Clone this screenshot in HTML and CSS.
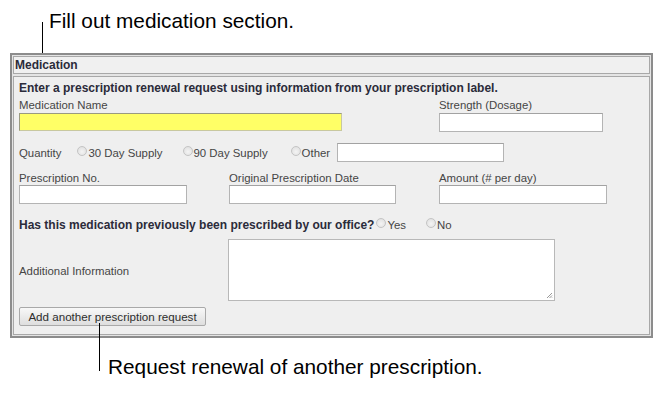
FILE: index.html
```html
<!DOCTYPE html>
<html>
<head>
<meta charset="utf-8">
<link rel="stylesheet" href="styles.css">
</head>
<body>
<div class="page">
  <div class="note note-top">Fill out medication section.</div>
  <span class="pointer pointer-top"></span>

  <div class="frame">
    <div class="frame-head">Medication</div>
    <div class="frame-body">
      <p class="intro">Enter a prescription renewal request using information from your prescription label.</p>

      <div class="grid row-name">
        <div class="field span2">
          <label class="lbl">Medication Name</label>
          <span class="input input-name"></span>
        </div>
        <div class="field">
          <label class="lbl">Strength (Dosage)</label>
          <span class="input input-strength"></span>
        </div>
      </div>

      <div class="qty">
        <span class="lbl qty-label">Quantity</span>
        <span class="radio"></span><span class="lbl opt opt-30">30 Day Supply</span>
        <span class="radio"></span><span class="lbl opt opt-90">90 Day Supply</span>
        <span class="radio"></span><span class="lbl opt opt-other">Other</span>
        <span class="input input-other"></span>
      </div>

      <div class="grid row-rx">
        <div class="field">
          <label class="lbl">Prescription No.</label>
          <span class="input input-rx"></span>
        </div>
        <div class="field">
          <label class="lbl">Original Prescription Date</label>
          <span class="input input-date"></span>
        </div>
        <div class="field">
          <label class="lbl">Amount (# per day)</label>
          <span class="input input-amount"></span>
        </div>
      </div>

      <div class="prev">
        <span class="prev-q">Has this medication previously been prescribed by our office?</span>
        <span class="radio"></span><span class="lbl opt opt-yes">Yes</span>
        <span class="radio"></span><span class="lbl opt">No</span>
      </div>

      <div class="grid row-info">
        <span class="lbl info-label">Additional Information</span>
        <span class="textarea"><svg class="grip" width="7" height="7" viewBox="0 0 7 7"><path d="M6 1L1 6M6 3.5L3.5 6M6 5.5L5.5 6" stroke="#999" stroke-width="1" fill="none"/></svg></span>
      </div>

      <div class="actions">
        <span class="btn">Add another prescription request</span>
      </div>
    </div>
  </div>

  <span class="pointer pointer-bottom"></span>
  <div class="note note-bottom">Request renewal of another prescription.</div>
</div>
</body>
</html>
```
FILE: styles.css
```css
html, body {
  margin: 0;
  padding: 0;
  background: #ffffff;
}

.page {
  position: relative;
  width: 665px;
  height: 398px;
  font-family: "Liberation Sans", Arial, sans-serif;
}

.note {
  font-size: 20.8px;
  line-height: 23px;
  color: #000;
}

.note-top {
  box-sizing: border-box;
  height: 53px;
  padding: 9px 0 0 49px;
}

.note-bottom {
  margin-top: 17px;
  padding-left: 108px;
}

.pointer {
  position: absolute;
  width: 1px;
  background: #000;
}

.pointer-top {
  left: 42px;
  top: 22px;
  height: 31px;
}

.pointer-bottom {
  left: 99px;
  top: 323px;
  height: 48px;
}

.frame {
  box-sizing: border-box;
  margin-left: 10px;
  width: 643px;
  border: 2px solid #8c8c8c;
  padding: 1px;
  background: #e4e4e4;
  font-size: 11.4px;
  color: #3c3c3c;
}

.frame-head {
  box-sizing: border-box;
  height: 18px;
  border: 1px solid #a8a8a8;
  background: #f0f0f0;
  padding: 0 0 0 1px;
  line-height: 16px;
  font-size: 12px;
  font-weight: bold;
  color: #2b2b3a;
}

.frame-body {
  margin-top: 2px;
  border: 1px solid #a8a8a8;
  background: #efefef;
  padding: 4px 0 8px 5px;
}

.intro {
  margin: 0;
  line-height: 14px;
  font-size: 12px;
  font-weight: bold;
  color: #2b2b3a;
}

.grid {
  display: grid;
  grid-template-columns: 210px 210px 1fr;
}

.field {
  display: flex;
  flex-direction: column;
  align-items: flex-start;
}

.span2 {
  grid-column: span 2;
}

.lbl {
  color: #454545;
  white-space: nowrap;
}

.row-name {
  margin-top: 3px;
}

.row-name .lbl {
  line-height: 14px;
  margin-bottom: 1px;
}

.input {
  box-sizing: border-box;
  display: block;
  height: 19px;
  background: #ffffff;
  border: 1px solid #b4b4b4;
  border-top-color: #a2a2a2;
}

.input-name {
  width: 323px;
  height: 18px;
  background: #ffff66;
  border-color: #c8c8a0;
  border-top-color: #9a9a80;
  border-left-color: #9a9a80;
}

.input-strength { width: 164px; }
.input-other { width: 167px; margin-left: 7px; }
.input-rx { width: 168px; }
.input-date { width: 167px; }
.input-amount { width: 168px; }

.qty {
  margin-top: 11px;
  height: 19px;
  display: flex;
  align-items: center;
}

.qty-label {
  margin-right: 16px;
}

.radio {
  box-sizing: border-box;
  display: inline-block;
  width: 10px;
  height: 10px;
  border-radius: 50%;
  border: 1px solid #c4c4c4;
  background: radial-gradient(circle at 50% 60%, #f4f4f4 0%, #dcdcdc 100%);
  margin-top: -4px;
  margin-right: 1px;
}

.opt-30 { margin-right: 20px; }
.opt-90 { margin-right: 23px; }

.row-rx {
  margin-top: 10px;
}

.row-rx .lbl {
  line-height: 13px;
}

.prev {
  margin-top: 14px;
  height: 14px;
  display: flex;
  align-items: center;
  white-space: nowrap;
}

.prev-q {
  font-size: 12px;
  font-weight: bold;
  color: #2b2b3a;
  margin-right: 2px;
}

.opt-yes { margin-right: 20px; }

.row-info {
  margin-top: 7px;
  align-items: center;
}

.info-label {
  grid-column: 1;
  padding-top: 2px;
}

.textarea {
  grid-column: 2 / span 2;
  position: relative;
  box-sizing: border-box;
  display: block;
  width: 327px;
  height: 62px;
  margin-left: -1px;
  background: #ffffff;
  border: 1px solid #b8b8b8;
}

.grip {
  position: absolute;
  right: 1px;
  bottom: 1px;
}

.actions {
  margin-top: 6px;
  display: flex;
}

.btn {
  box-sizing: border-box;
  display: inline-flex;
  align-items: center;
  justify-content: center;
  width: 187px;
  height: 19px;
  border: 1px solid #a9a9a9;
  border-radius: 2px;
  background: linear-gradient(#f8f8f8, #dedede);
  color: #2e2e2e;
  font-size: 11.6px;
}
```
